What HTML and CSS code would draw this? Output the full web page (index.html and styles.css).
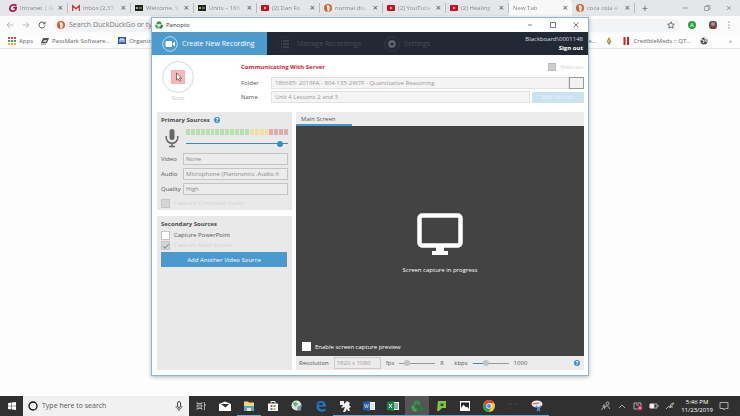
FILE: index.html
```html
<!DOCTYPE html>
<html lang="en">

<head>
    <meta charset="UTF-8">
    <meta name="viewport" content="width=device-width, initial-scale=1.0">
    <title>Panopto</title>
    <link rel="stylesheet" href="styles.css">
</head>

<body>
    <svg class="symbols" aria-hidden="true">
        <symbol id="youtube" viewBox="0 0 8 8">
            <rect y="1" width="8" height="6" rx="1" fill="#e0001b" />
            <path d="M3 2.6v2.8L5.6 4z" fill="#fff" />
        </symbol>
        <symbol id="duck" viewBox="0 0 8 8">
            <circle cx="4" cy="4" r="4" fill="#de5833" />
            <path d="M2.6 1.6c2-1 3.2.4 3.2 1.8L5.2 7.4 3.6 7.6z" fill="#fff" />
            <path d="M4.4 3.6h2.2v1H4.4z" fill="#f5b52e" />
        </symbol>
        <symbol id="board" viewBox="0 0 8 8">
            <rect y="1" width="8" height="6" fill="#22251c" />
            <path d="M1 3h2v2H1zM4 3.4h3v1H4z" fill="#a5ab8d" />
        </symbol>
        <symbol id="recycle" viewBox="0 0 12 12">
            <path d="M4 .6h4l2 3.4-2.8 1.6L6 3.4 4.8 5.8 2 4.2z" fill="#2f9148" />
            <path d="M1 5l3.2 1.8-.8 1.6h2.2v3H2.6L.2 8z" fill="#3da653" />
            <path d="M10.8 5L12 8l-2.2 3.4H6.4v-3h2.4l-1-1.8z" fill="#1f7d3b" />
        </symbol>
        <symbol id="chrome" viewBox="0 0 12 12">
            <circle cx="6" cy="6" r="6" fill="#f7c92b" />
            <path d="M.8 3A6 6 0 0 1 11.2 3H6L3.4 7.4z" fill="#dc4437" />
            <path d="M.8 3A6 6 0 0 0 5.6 12L8.4 7.4 3.6 7.6z" fill="#2a9d56" />
            <circle cx="6" cy="6" r="2.7" fill="#fff" />
            <circle cx="6" cy="6" r="2.1" fill="#4a8af4" />
        </symbol>
    </svg>

    <header class="browser">
        <nav class="tabs">
            <a href="#" class="tab"><svg viewBox="0 0 8 8"><path d="M7.4 1.6C5.2-.2 1 1 .8 4.4.8 7.6 5 7.8 6.6 6l.6-2.4H4.4" fill="none" stroke="#a5113f" stroke-width="1.6" /></svg><span>Intranet | G</span><i>×</i></a>
            <a href="#" class="tab"><svg viewBox="0 0 8 8"><path d="M.6 7V1.6L4 4.8l3.4-3.2V7" fill="none" stroke="#d2353a" stroke-width="1.3" /></svg><span>Inbox (2,37</span><i>×</i></a>
            <a href="#" class="tab"><svg><use href="#board" /></svg><span>Welcome, S</span><i>×</i></a>
            <a href="#" class="tab"><svg><use href="#board" /></svg><span>Units – 186</span><i>×</i></a>
            <a href="#" class="tab"><svg><use href="#youtube" /></svg><span>(2) Dan Fo</span><i>×</i></a>
            <a href="#" class="tab"><svg><use href="#duck" /></svg><span>normal dis</span><i>×</i></a>
            <a href="#" class="tab"><svg><use href="#youtube" /></svg><span>(2) YouTube</span><i>×</i></a>
            <a href="#" class="tab"><svg><use href="#youtube" /></svg><span>(2) Healing</span><i>×</i></a>
            <a href="#" class="tab active"><span>New Tab</span><i>×</i></a>
            <a href="#" class="tab"><svg><use href="#duck" /></svg><span>coca cola e</span><i>×</i></a>
            <button class="new-tab" aria-label="New tab">+</button>
            <div class="controls">
                <button aria-label="Minimize browser"><svg viewBox="0 0 8 8"><path d="M1 4h6" /></svg></button>
                <button aria-label="Restore browser"><svg viewBox="0 0 8 8"><path d="M1.5 2.5h4v4h-4zM3 2.5v-1h4v4H5.5" /></svg></button>
                <button aria-label="Close browser"><svg viewBox="0 0 8 8"><path d="M2 2l4 4M6 2L2 6" /></svg></button>
            </div>
        </nav>
        <div class="toolbar">
            <button aria-label="Back"><svg viewBox="0 0 8 8" class="dim"><path d="M7.5 4H1M4 1L1 4l3 3" /></svg></button>
            <button aria-label="Forward"><svg viewBox="0 0 8 8" class="dim"><path d="M.5 4H7M4 1l3 3-3 3" /></svg></button>
            <button aria-label="Reload"><svg viewBox="0 0 8 8"><path d="M6.6 2.4A3 3 0 1 0 7 4.6M7 .8v2H5" /></svg></button>
            <div class="address">
                <svg><use href="#duck" /></svg>
                <input type="text" aria-label="Address" placeholder="Search DuckDuckGo or type a URL">
                <svg viewBox="0 0 8 8"><path d="M4 .8l1 2.2 2.4.2-1.8 1.6.5 2.4L4 6 1.9 7.2l.5-2.4L.6 3.2 3 3z" fill="none" stroke="#555" stroke-width=".8" /></svg>
            </div>
            <button class="extension" aria-label="Extension">A</button>
            <button class="avatar" aria-label="Profile"><svg viewBox="0 0 8 8"><rect width="8" height="8" rx="3" fill="#5d5358" stroke="none" /><circle cx="4" cy="3" r="2" fill="#b68b88" stroke="none" /><path d="M1.5 8c0-3 5-3 5 0z" fill="#952f3b" stroke="none" /></svg></button>
            <button aria-label="Menu"><svg viewBox="0 0 8 8"><path d="M4 .6v1M4 3.5v1M4 6.4v1" /></svg></button>
        </div>
        <nav class="bookmarks">
            <a href="#"><svg viewBox="0 0 8 8"><path d="M0 1h8" stroke="#d9473b" stroke-width="2" stroke-dasharray="2 1" /><path d="M0 4h8" stroke="#4a9e52" stroke-width="2" stroke-dasharray="2 1" /><path d="M0 7h8" stroke="#e6b23a" stroke-width="2" stroke-dasharray="2 1" /></svg>Apps</a>
            <a href="#"><svg viewBox="0 0 8 8"><path d="M2 1h6L6 6H0z" fill="#555" /><path d="M3 3h3L5 5H2z" fill="#ccc" /><path d="M0 7h5" stroke="#777" /></svg>PassMark Software...</a>
            <a href="#"><svg viewBox="0 0 8 8"><rect width="8" height="7" fill="#3156a4" /><path d="M2 5.5V2h4v3.5M4 2v3" fill="none" stroke="#fff" /></svg>Organizer</a>
            <div class="bookmarks-right">
                <a href="#">e...</a>
                <a href="#" aria-label="Color bookmark"><svg viewBox="0 0 8 8"><path d="M4 0l2 4H2z" fill="#d95640" /><path d="M4 4h2.5L4 8z" fill="#3c80d3" /><path d="M4 4H1.5L4 8z" fill="#4ba157" /><path d="M4 2l2 2-2 2-2-2z" fill="#e4bb3f" /></svg></a>
                <a href="#"><svg viewBox="0 0 8 8"><path d="M2.5 0v8M6 0v8" stroke="#d31f2e" stroke-width="2" /></svg>CredibleMeds :: QT...</a>
                <a href="#" class="globe" aria-label="Web page"><svg viewBox="0 0 8 8"><circle cx="4" cy="4" r="3.5" fill="#555" /><path d="M1 2.5l2 .5 1 1.5-1 1.5M4 1l2.5 1L5 3.5l2 1" fill="none" stroke="#fff" /></svg></a>
                <a href="#" aria-label="More bookmarks">»</a>
            </div>
        </nav>
    </header>

    <main class="page"></main>

    <section class="window">
        <div class="titlebar">
            <svg><use href="#recycle" /></svg>
            <h1>Panopto</h1>
            <div class="window-buttons">
                <button aria-label="Minimize"><svg viewBox="0 0 8 8"><path d="M2 4h4" /></svg></button>
                <button aria-label="Maximize"><svg viewBox="0 0 8 8"><path d="M1.5 1.5h5v5h-5z" /></svg></button>
                <button aria-label="Close"><svg viewBox="0 0 8 8"><path d="M1.5 1.5l5 5M6.5 1.5l-5 5" /></svg></button>
            </div>
        </div>

        <nav class="menu">
            <a href="#" class="current">
                <svg viewBox="0 0 16 16"><circle cx="8" cy="8" r="7.3" fill="none" stroke="#b8dcf2" /><rect x="3.5" y="5" width="6.5" height="6" rx="1" fill="#fff" /><path d="M10 8l3-2.6v5.2z" fill="#fff" /></svg>
                Create New Recording
            </a>
            <a href="#">
                <svg viewBox="0 0 16 16"><circle cx="8" cy="8" r="7.3" fill="none" stroke="#2d333e" /><path d="M4 5h1M6 5h6M4 8h1M6 8h6M4 11h1M6 11h6" stroke="#505762" /></svg>
                Manage Recordings
            </a>
            <a href="#">
                <svg viewBox="0 0 16 16"><circle cx="8" cy="8" r="7.3" fill="none" stroke="#343a46" /><circle cx="8" cy="8" r="2.5" fill="none" stroke="#626975" stroke-width="1.8" /><circle cx="8" cy="8" r="3.8" fill="none" stroke="#626975" stroke-dasharray="1.5 1.48" /></svg>
                Settings
            </a>
            <div class="account">
                <span>Blackboard\0001148</span>
                <a href="#">Sign out</a>
            </div>
        </nav>

        <div class="session">
            <button class="stop" disabled>
                <svg viewBox="0 0 32 32"><circle cx="16" cy="16" r="15.4" fill="#fff" stroke="#d9d6d8" /><rect x="9" y="9" width="14" height="14" fill="#f6b5bb" /><path d="M14.5 12v7l1.6-1.4 1.2 2.5 1.3-.6-1.2-2.5h2.2z" fill="#fff" stroke="#555" stroke-width=".8" /></svg>
                Stop
            </button>
            <div class="details">
                <div class="status-row">
                    <strong>Communicating With Server</strong>
                    <label class="webcast"><input type="checkbox" disabled>Webcast</label>
                </div>
                <div class="detail-row">
                    <label for="folder">Folder</label>
                    <div class="folder">
                        <select id="folder" disabled>
                            <option>186685: 2019FA - 804-135-2W7F - Quantitative Reasoning</option>
                        </select>
                        <button aria-label="Choose folder" disabled></button>
                    </div>
                </div>
                <div class="detail-row">
                    <label for="name">Name</label>
                    <input type="text" id="name" value="Unit 4 Lessons 2 and 3" disabled>
                    <button class="join" disabled>Join Session</button>
                </div>
            </div>
        </div>

        <div class="workspace">
            <div class="sources">
                <section class="panel primary">
                    <h2>Primary Sources <button class="help" aria-label="Help">?</button></h2>
                    <div class="audio-level">
                        <svg viewBox="0 0 14 20"><rect x="4.5" y="1" width="5" height="11" rx="2.5" fill="#666" /><path d="M1.2 8v1.5a5.8 5.8 0 0 0 11.6 0V8M7 15v3.5M4 18.5h6" fill="none" stroke="#666" stroke-width="1.5" /></svg>
                        <div class="level">
                            <div class="meter">
                                <b></b><b></b><b></b><b></b><b></b><b></b><b></b><b></b><b></b><b></b><b></b><b></b><b></b>
                                <b class="mid"></b><b class="mid"></b><b class="mid"></b><b class="mid"></b>
                                <b class="high"></b><b class="high"></b><b class="high"></b><b class="high"></b>
                            </div>
                            <input type="range" class="volume" aria-label="Volume" value="95">
                        </div>
                    </div>
                    <div class="source-row">
                        <label for="video">Video</label>
                        <select id="video" disabled><option>None</option></select>
                    </div>
                    <div class="source-row">
                        <label for="audio">Audio</label>
                        <select id="audio" disabled><option>Microphone (Plantronics .Audio 6</option></select>
                    </div>
                    <div class="source-row">
                        <label for="quality">Quality</label>
                        <select id="quality" disabled><option>High</option></select>
                    </div>
                    <label class="check faded computer-audio"><input type="checkbox" disabled>Capture Computer Audio</label>
                </section>
                <section class="panel secondary">
                    <h2>Secondary Sources</h2>
                    <label class="check"><input type="checkbox">Capture PowerPoint</label>
                    <label class="check faded"><input type="checkbox" checked disabled>Capture Main Screen</label>
                    <button class="add-source">Add Another Video Source</button>
                </section>
            </div>

            <section class="screen">
                <div class="screen-tabs"><a href="#">Main Screen</a></div>
                <div class="preview">
                    <div class="progress">
                        <svg viewBox="0 0 46 42"><rect x="2.5" y="2.500" width="41" height="30" rx="2.5" fill="none" stroke="#fff" stroke-width="4.5" /><path d="M19 33h8v5h4v4H15v-4h4z" fill="#fff" /></svg>
                        <p>Screen capture in progress</p>
                    </div>
                    <label class="enable"><input type="checkbox">Enable screen capture preview</label>
                </div>
                <div class="quality-bar">
                    <label for="resolution">Resolution</label>
                    <select id="resolution" disabled><option>1920 x 1080</option></select>
                    <label for="fps">fps</label>
                    <input type="range" id="fps" class="small-range" value="16">
                    <output for="fps">8</output>
                    <label for="kbps">kbps</label>
                    <input type="range" id="kbps" class="small-range blue" value="34">
                    <output for="kbps">1000</output>
                    <button class="help" aria-label="Quality help">?</button>
                </div>
            </section>
        </div>
    </section>

    <footer class="taskbar">
        <button class="start" aria-label="Start"><svg viewBox="0 0 8 8"><path d="M0 1.2l3.5-.6v3.1H0zM4 .5L8 0v3.7H4zM0 4.2h3.5v3.2L0 6.9zM4 4.2h4V8l-4-.5z" fill="#fff" /></svg></button>
        <div class="search">
            <svg viewBox="0 0 10 10"><circle cx="5" cy="5" r="4" fill="none" stroke="#111" stroke-width="1.3" /></svg>
            <input type="text" aria-label="Search" placeholder="Type here to search">
            <svg viewBox="0 0 10 10"><rect x="3.5" y=".5" width="3" height="6" rx="1.5" fill="none" stroke="#444" /><path d="M2 5c0 4 6 4 6 0M5 8v2" fill="none" stroke="#444" stroke-width=".8" /></svg>
        </div>
        <div class="apps">
            <button aria-label="Task view"><svg viewBox="0 0 12 12"><path d="M2 2v1.5h5V2M2 10V8.5h5V10M2 5h5v2H2zM9.500 2v8M9 5h2" fill="none" stroke="#ccc" stroke-width=".8" /></svg></button>
            <button aria-label="Mail"><svg viewBox="0 0 12 12"><path d="M0 4l6-2.5L12 4v7H0z" fill="#fff" /><path d="M2 4h8L6.5 7.5z" fill="#333" /></svg></button>
            <button aria-label="File Explorer" class="open"><svg viewBox="0 0 12 12"><path d="M1 1.5h4l1 1h5v8H1z" fill="#f7d374" /><path d="M1 6h10v5H1z" fill="#4fa8d6" /><path d="M4 8h4v3H4z" fill="#f8e4a4" /></svg></button>
            <button aria-label="Store"><svg viewBox="0 0 12 12"><path d="M1 3.5h10V11H1z" fill="#fff" /><path d="M4 3.5v-2h4v2" fill="none" stroke="#eee" /><path d="M3.5 5h2v2h-2z" fill="#d94f3d" /><path d="M6.5 5h2v2h-2z" fill="#68a644" /><path d="M3.5 8h2v2h-2z" fill="#3a8ac9" /><path d="M6.5 8h2v2h-2z" fill="#e2b334" /></svg></button>
            <button aria-label="Maps"><svg viewBox="0 0 12 12"><circle cx="5.5" cy="5.5" r="5" fill="#d9e3df" /><path d="M2 3l3-1 2 2-3 3zM6 7l4-2v4z" fill="#64a87d" /><path d="M6 7l5 3-4 1z" fill="#6790ba" /></svg></button>
            <button aria-label="Edge"><svg viewBox="0 0 12 12"><path d="M1 5.5C1.5-.5 11-.5 11 6.5H4C4 10 8 10 10.5 8.500v2.300C6 13 1.5 10.5 1.5 7 1.5 4.5 4 3.5 5 3.3 4 4 4 5 4 5h4C8 1.5 3 2.5 1 5.5z" fill="#1c78ca" /></svg></button>
            <button aria-label="Studio" class="open"><svg viewBox="0 0 12 12"><path d="M1 1h4v4H1zM6 3l2-2 3 2-1 2 2 2-2 1 1 3H9L8 9l-2 3H4l2-5-4 1 2-3z" fill="#eee" /></svg></button>
            <button aria-label="Word" class="open"><svg viewBox="0 0 12 12"><path d="M6 2h6v8H6z" fill="#f3f5fb" /><path d="M0 2l7-1v10l-7-1z" fill="#2b5cad" /><path d="M1.5 4l1 4 1-3.5 1 3.5 1-4M8 4h3M8 6h3M8 8h3" fill="none" stroke="#b8cbe8" stroke-width=".8" /></svg></button>
            <button aria-label="Excel" class="open"><svg viewBox="0 0 12 12"><path d="M6 2h6v8H6z" fill="#e6f3e9" /><path d="M0 2l7-1v10l-7-1z" fill="#18834b" /><path d="M2 4l3 4M5 4L2 8" stroke="#fff" /><path d="M8 3v6M10 3v6" stroke="#18834b" /></svg></button>
            <button aria-label="Panopto" class="open focused"><svg><use href="#recycle" /></svg></button>
            <button aria-label="Print" class="open"><svg viewBox="0 0 12 12"><path d="M3 1h8v7H7l-3 3H2z" fill="#83c342" /><path d="M5.5 3.5h3V6h-3z" fill="#33512b" /></svg></button>
            <button aria-label="Photos" class="open"><svg viewBox="0 0 12 12"><path d="M1 1h10v10H1z" fill="#fff" /><path d="M2 2.5h8V9L8 6.5l-1 1-2.5-3L2 8z" fill="#252525" /></svg></button>
            <button aria-label="Chrome" class="open"><svg><use href="#chrome" /></svg></button>
            <button aria-label="Monitor" class="open"><svg viewBox="0 0 12 12"><path d="M1 4h4M7 3l3 2M3 7v2" stroke="#35513a" /></svg></button>
            <button aria-label="Snipping tool" class="open"><svg viewBox="0 0 12 12"><ellipse cx="6" cy="4" rx="5.5" ry="3.5" fill="#eee4e8" /><path d="M2 4l6-1" stroke="#c85260" /><path d="M5 6l4 5M10 6l-4 5" stroke="#4a8ac3" stroke-width="1.5" /></svg></button>
        </div>
        <div class="tray">
            <svg viewBox="0 0 10 10"><circle cx="6.5" cy="2.5" r="1.5" /><path d="M3.5 8c0-4 5-4 5 0M1 9c0-3 2-3 3-2" /><circle cx="3" cy="5" r="1" /></svg>
            <svg viewBox="0 0 10 10"><path d="M2 7l3-3 3 3" /></svg>
            <svg viewBox="0 0 10 10"><path d="M1 2h7v6H1zM3 4h3" /><circle cx="7" cy="7" r="2.5" fill="#d52c52" stroke="none" /><path d="M6 6l2 2M8 6L6 8" /></svg>
            <svg viewBox="0 0 10 10"><path d="M1 3h7v4H1zM9 4v2" /><path d="M1 3h4v4H1z" fill="#fff" /></svg>
            <svg viewBox="0 0 10 10"><path d="M1 8l3-3 1 2 4-5-3 1-1 3h3" /></svg>
            <time datetime="2019-11-23T17:46">5:46 PM<br>11/23/2019</time>
            <button aria-label="Notifications"><svg viewBox="0 0 10 10"><path d="M1 1.5h8v6H6.5L5 9V7.5H1z" /></svg></button>
        </div>
    </footer>
</body>

</html>
```

FILE: styles.css
```css
* {
    box-sizing: border-box;
}

body {
    margin: 0;
    min-height: 100vh;
    display: flex;
    flex-direction: column;
    position: relative;
    font-family: "Open Sans", "Noto Sans", sans-serif;
    font-size: 6px;
    line-height: 8px;
    color: #555;
    background-color: #fdfdfd;
}

button,
input,
select {
    margin: 0;
    padding: 0;
    border: none;
    background: none;
    font: inherit;
    color: inherit;
    appearance: none;
    border-radius: 0;
    opacity: 1;
}

button {
    display: flex;
    align-items: center;
    justify-content: center;
}

a {
    color: inherit;
    text-decoration: none;
}

svg {
    width: 8px;
    height: 8px;
    flex: none;
    display: block;
}

h1,
h2,
p {
    margin: 0;
    font-size: 6px;
}

.symbols {
    position: absolute;
    width: 0;
    height: 0;
}

/* browser */
.tabs {
    display: flex;
    height: 16px;
    padding-left: 5px;
    background-color: #e4e6ea;
}

.tab {
    display: flex;
    align-items: center;
    gap: 3px;
    flex: 0 1 63px;
    min-width: 0;
    padding: 0 4px;
    border-right: 1px solid #b9bbbf;
    height: 10px;
    margin-top: 3px;
    color: #85878b;
}

.tab span {
    flex: 1;
    white-space: nowrap;
    mask-image: linear-gradient(to right, #000 65%, rgba(0, 0, 0, 0.2));
}

.tab i {
    font-style: normal;
    font-size: 9px;
    color: #555;
}

.tab.active {
    height: 16px;
    margin-top: 0;
    background-color: #f8f8f9;
    border-right: none;
    border-radius: 3px 3px 0 0;
}

.new-tab {
    width: 20px;
    font-size: 11px;
    color: #555;
}

.controls {
    display: flex;
    margin-left: auto;
    gap: 14px;
    padding-right: 7px;
}

.controls svg {
    fill: none;
    stroke: #a0a2a5;
    stroke-width: 1;
}

.toolbar {
    display: flex;
    align-items: center;
    gap: 8px;
    height: 18px;
    padding: 0 7px 0 6px;
    background-color: #fbfbfc;
}

.toolbar button > svg {
    fill: none;
    stroke: #555;
    stroke-width: 1;
}

.toolbar .dim {
    stroke: #b9b9b9 !important;
}

.address {
    flex: 1;
    display: flex;
    align-items: center;
    gap: 4px;
    height: 13px;
    padding: 0 5px 0 3px;
    border-radius: 7px;
    background-color: #f3f4f5;
}

.address input {
    flex: 1;
    font-size: 7px;
}

.address input::placeholder {
    color: #777;
}

.extension {
    width: 8px;
    height: 8px;
    border-radius: 50%;
    background-color: #25a146;
    color: #fff;
}

.avatar {
    margin-left: 5px;
}

.bookmarks {
    display: flex;
    align-items: center;
    gap: 8px;
    height: 15px;
    padding: 0 8px;
    border-bottom: 1px solid #e3e4e6;
    color: #666;
}

.bookmarks a {
    display: flex;
    align-items: center;
    gap: 3px;
}

.bookmarks-right {
    display: flex;
    align-items: center;
    gap: 9px;
    margin-left: auto;
}

.bookmarks-right .globe {
    margin-right: 12px;
}

.page {
    flex: 1;
}

/* recorder window */
.window {
    position: absolute;
    top: 17px;
    right: 151px;
    bottom: 40px;
    left: 151px;
    display: flex;
    flex-direction: column;
    background-color: #fff;
    border: 1px solid #8db7d1;
    box-shadow: 0 1px 4px rgba(0, 0, 0, 0.3);
}

.titlebar {
    display: flex;
    align-items: center;
    gap: 3px;
    height: 14px;
    padding: 0 8px 0 3px;
    color: #333;
}

.titlebar h1 {
    font-weight: normal;
}

.window-buttons {
    display: flex;
    gap: 15px;
    margin-left: auto;
}

.window-buttons svg {
    fill: none;
    stroke: #444;
    stroke-width: .7;
}

.menu {
    display: flex;
    height: 23px;
    background-color: #222935;
    font-size: 7px;
    color: #464d59;
}

.menu > a {
    display: flex;
    align-items: center;
    gap: 4px;
    padding: 0 13px 0 10px;
    white-space: nowrap;
}

.menu > a svg {
    width: 16px;
    height: 16px;
}

.menu > .current {
    padding-right: 10px;
    width: 115px;
    background-color: #4d9bcd;
    color: #fff;
}

.account {
    display: flex;
    flex-direction: column;
    justify-content: center;
    align-items: flex-end;
    margin-left: auto;
    padding-right: 5px;
    font-size: 6px;
    line-height: 9px;
    color: #d8dbe0;
}

.account a {
    font-weight: bold;
    color: #fff;
}

.session {
    display: flex;
    gap: 47px;
    padding: 6px 4px 9px 10px;
}

.stop {
    flex-direction: column;
    justify-content: flex-start;
    gap: 1px;
    color: #c8c8c8;
}

.stop svg {
    width: 32px;
    height: 32px;
}

.details {
    flex: 1;
    display: flex;
    flex-direction: column;
    gap: 2px;
}

.status-row {
    display: flex;
    align-items: center;
    justify-content: space-between;
    height: 12px;
    margin-bottom: 2px;
    color: #d8213e;
}

.webcast {
    display: flex;
    align-items: center;
    gap: 4px;
    color: #d5d5d5;
}

.webcast input {
    width: 8px;
    height: 8px;
    background-color: #ccc;
    border: 1px solid #bbb;
}

.detail-row {
    display: flex;
    align-items: center;
    gap: 2px;
    height: 12px;
}

.detail-row > label {
    width: 28px;
}

.folder {
    display: flex;
    flex: 1;
    height: 12px;
}

.detail-row select,
.detail-row input {
    flex: 1;
    min-width: 0;
    height: 12px;
    padding: 0 3px;
    border: 1px solid #e2e2e2;
    background-color: #f4f4f4;
    color: #999;
}

.folder button {
    width: 15px;
    border: 1px solid #999;
    background-color: #f1f1f1;
}

.join {
    width: 52px;
    height: 11px;
    background-color: #cce2ef;
    color: #e6f2f9;
}

.workspace {
    flex: 1;
    display: grid;
    grid-template-columns: 135px 1fr;
    gap: 4px;
    padding: 0 4px 5px 5px;
}

.sources {
    display: flex;
    flex-direction: column;
    gap: 6px;
}

.panel {
    padding: 4px;
    background-color: #e9e9e9;
}

.panel h2 {
    display: flex;
    align-items: center;
    gap: 4px;
    color: #4a4a4a;
}

.primary {
    padding-bottom: 2px;
}

.help {
    width: 6px;
    height: 6px;
    border-radius: 50%;
    background-color: #3e91c6;
    color: #fff;
    font-size: 5px;
    font-weight: bold;
}

.audio-level {
    display: flex;
    gap: 7px;
    padding: 4px 0 5px 4px;
}

.audio-level svg {
    width: 14px;
    height: 20px;
}

.level {
    flex: 1;
    display: flex;
    flex-direction: column;
    gap: 5px;
}

.meter {
    display: flex;
    gap: 1px;
    height: 6px;
    margin-top: 1px;
}

.meter b {
    flex: 1;
    background-color: #b6dfb0;
}

.meter .mid {
    background-color: #eee1a2;
}

.meter .high {
    background-color: #e4a9a9;
}

input[type="range"] {
    height: 7px;
    background: linear-gradient(#999, #999) center / 100% 1px no-repeat;
}

input[type="range"]::-webkit-slider-thumb {
    appearance: none;
    width: 6px;
    height: 6px;
    border-radius: 50%;
    background-color: #c3c3c3;
}

input.volume {
    width: 100%;
    background-image: linear-gradient(#3c8bbd, #3c8bbd);
}

input.volume::-webkit-slider-thumb {
    background-color: #378bc1;
}

.source-row {
    display: flex;
    align-items: center;
    height: 12px;
    margin-bottom: 3px;
}

.source-row label {
    width: 22px;
}

.source-row select {
    flex: 1;
    min-width: 0;
    height: 12px;
    padding: 0 2px;
    border: 1px solid #c4c4c4;
    background-color: #ececec;
    color: #8b8b8b;
}

.check {
    display: flex;
    align-items: center;
    gap: 4px;
    height: 10px;
}

.check input {
    width: 9px;
    height: 9px;
    border: 1px solid #c4c4c4;
    background-color: #fff;
}

.check.faded {
    color: #d3d3d3;
}

.check.faded input {
    background-color: #d6d6d6;
}

.check input:checked {
    display: grid;
    place-items: center;
}

.check input:checked::before {
    content: "";
    width: 5px;
    height: 2px;
    border: solid #888;
    border-width: 0 0 1px 1px;
    transform: rotate(-45deg);
}

.computer-audio {
    margin-top: 2px;
}

.secondary {
    flex: 1;
}

.secondary h2 {
    margin-bottom: 2px;
}

.add-source {
    width: 126px;
    height: 15px;
    margin-top: 2px;
    background-color: #4a9acd;
    color: #fff;
}

.screen {
    display: flex;
    flex-direction: column;
    min-width: 0;
    background-color: #ececec;
}

.screen-tabs {
    display: flex;
    height: 14px;
}

.screen-tabs a {
    width: 56px;
    padding: 3px 5px 0;
    border-bottom: 2px solid #4797c9;
}

.preview {
    flex: 1;
    display: flex;
    flex-direction: column;
    background-color: #434343;
    color: #fff;
}

.progress {
    flex: 1;
    display: flex;
    flex-direction: column;
    align-items: center;
    justify-content: center;
    gap: 11px;
    padding-top: 18px;
}

.progress svg {
    width: 46px;
    height: 42px;
}

.enable {
    display: flex;
    align-items: center;
    gap: 4px;
    padding: 0 6px 5px;
}

.enable input {
    width: 9px;
    height: 9px;
    background-color: #fff;
}

.quality-bar {
    display: flex;
    align-items: center;
    gap: 5px;
    height: 14px;
    padding: 0 4px 0 3px;
}

.quality-bar select {
    width: 47px;
    height: 12px;
    padding: 0 2px;
    border: 1px solid #ccc;
    color: #999;
}

.small-range {
    width: 36px;
}

.small-range.blue {
    background: linear-gradient(to right, #3c8bbd 34%, #999 34%) center / 100% 1px no-repeat;
}

.quality-bar output {
    min-width: 9px;
}

.quality-bar .help {
    margin-left: auto;
}

/* taskbar */
.taskbar {
    display: flex;
    height: 20px;
    background-color: #303030;
}

.start {
    width: 23px;
}

.search {
    flex: 0 1 166px;
    display: flex;
    align-items: center;
    gap: 4px;
    padding: 0 5px;
    background-color: #f1f1f1;
}

.search input {
    flex: 1;
    min-width: 0;
    font-size: 7px;
}

.search input::placeholder {
    color: #555;
}

.search svg,
.tray svg {
    width: 10px;
    height: 10px;
}

.apps {
    display: flex;
}

.apps button {
    width: 24px;
    border-bottom: 1px solid transparent;
}

.apps svg {
    width: 12px;
    height: 12px;
}

.apps .open {
    border-bottom-color: #72a9d0;
}

.apps .focused {
    background-color: #555;
}

.tray {
    display: flex;
    align-items: center;
    gap: 6px;
    margin-left: auto;
    padding-right: 11px;
    color: #fff;
}

.tray svg {
    fill: none;
    stroke: #ccc;
    stroke-width: .8;
}

.tray time {
    text-align: center;
}
```
